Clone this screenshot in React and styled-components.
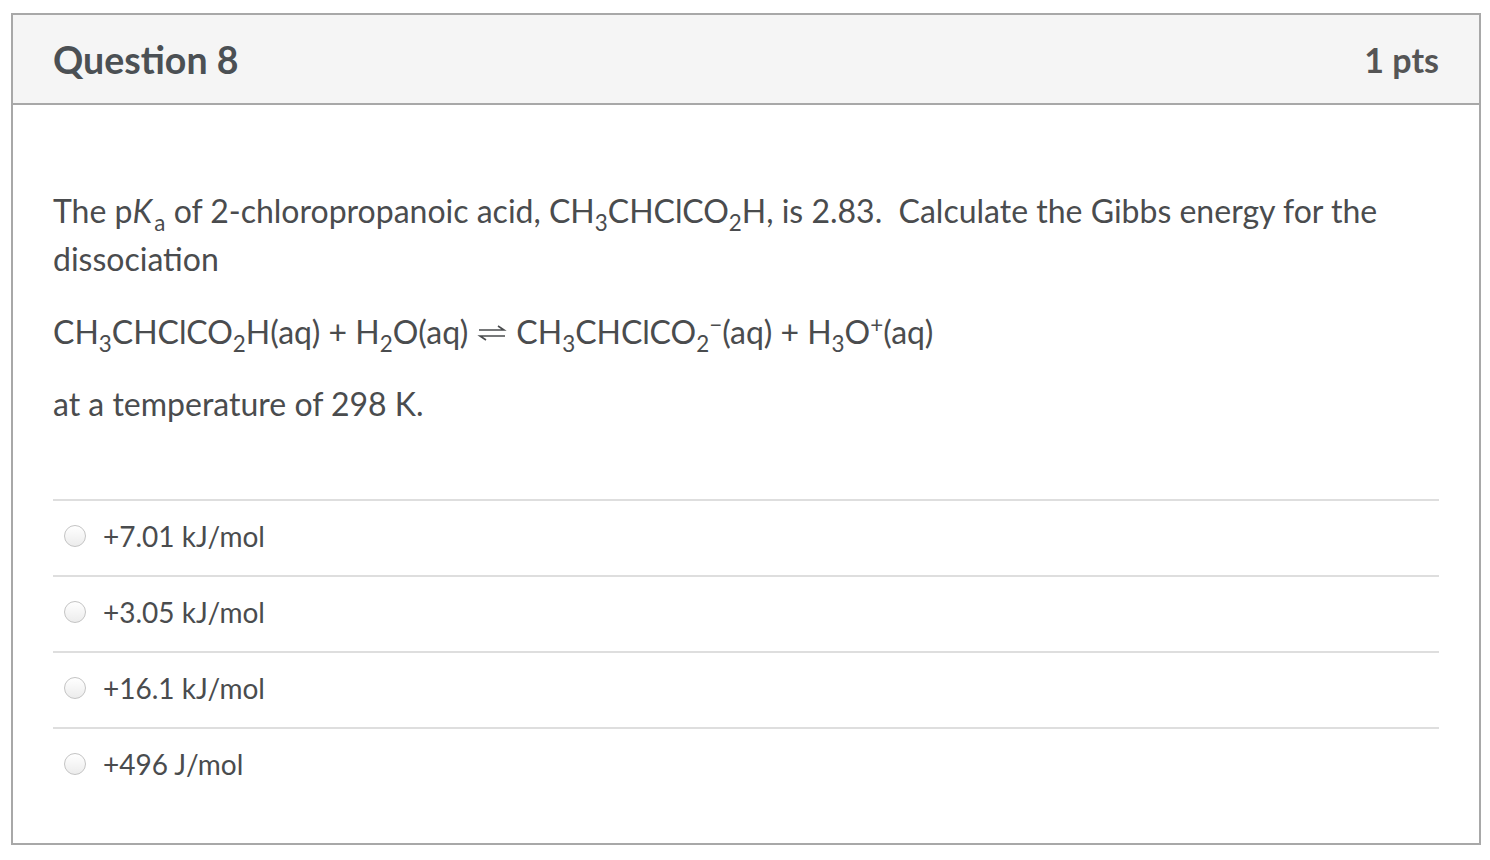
import React from 'react';
import styled, { createGlobalStyle } from 'styled-components';

const GlobalStyle = createGlobalStyle`
  body {
    margin: 0;
    background: #fff;
    font-family: Lato, "Open Sans", sans-serif;
  }
`;

const Page = styled.div`
  padding: 13px 9px 15px 11px;
`;

const Card = styled.div`
  border: 2px solid #a8a8a8;
  height: 832px;
  box-sizing: border-box;
`;

const Header = styled.div`
  display: flex;
  justify-content: space-between;
  align-items: center;
  height: 90px;
  box-sizing: border-box;
  padding: 0 40px 0 40px;
  background: #f5f5f5;
  border-bottom: 2px solid #a8a8a8;
  color: #4b5054;
  font-weight: 700;
`;

const Title = styled.span`
  font-size: 37.5px;
`;

const Points = styled.span`
  color: #555;
  font-size: 34px;
`;

const Body = styled.div`
  padding: 82px 40px 0 40px;
  color: #4a4c4e;
  font-size: 32px;
`;

const Para = styled.p`
  margin: 0 0 ${({ $gap }) => ($gap ?? 24)}px 0;
  line-height: 48px;
`;

const Sub = styled.sub`
  font-size: 0.7em;
  vertical-align: baseline;
  position: relative;
  top: 0.34em;
  line-height: 0;
  margin-left: ${({ $kern }) => $kern || 0}px;
`;

const Sup = styled.sup`
  font-size: 0.7em;
  vertical-align: baseline;
  position: relative;
  top: -0.5em;
  line-height: 0;
`;

const Arrow = styled.span`
  display: inline-block;
  width: 30px;
  margin: 0 9px;
  vertical-align: 3px;
`;

const Options = styled.div`
  margin-top: 71px;
`;

const Option = styled.label`
  display: flex;
  align-items: center;
  height: 76px;
  border-top: 2px solid #dedede;
  box-sizing: border-box;
  padding: 0 0 4px 11px;
  color: #4a4c4e;
  font-size: 28px;
`;

const Radio = styled.span`
  width: 22px;
  height: 22px;
  border-radius: 50%;
  border: 1px solid #c4c4c4;
  background: linear-gradient(#fff, #ececec);
  box-sizing: border-box;
  margin-right: 17px;
`;

const options = ['+7.01 kJ/mol', '+3.05 kJ/mol', '+16.1 kJ/mol', '+496 J/mol'];

const Equilibrium = () => (
  <Arrow>
    <svg width="30" height="16" viewBox="0 0 30 16">
      <path d="M2 5 H27 L21 1" fill="none" stroke="#4a4c4e" strokeWidth="1.6" />
      <path d="M28 11 H3 L9 15" fill="none" stroke="#4a4c4e" strokeWidth="1.6" />
    </svg>
  </Arrow>
);

export default function App() {
  return (
    <Page>
      <GlobalStyle />
      <Card>
        <Header>
          <Title>Question 8</Title>
          <Points>1 pts</Points>
        </Header>
        <Body>
          <Para $gap={22}>
            The p<i>K</i><Sub $kern={2}>a</Sub> of 2-chloropropanoic acid, CH<Sub>3</Sub>CHClCO<Sub>2</Sub>H, is 2.83.&nbsp; Calculate the Gibbs energy for the dissociation
          </Para>
          <Para>
            CH<Sub>3</Sub>CHClCO<Sub>2</Sub>H(aq) + H<Sub>2</Sub>O(aq)<Equilibrium />CH<Sub>3</Sub>CHClCO<Sub>2</Sub><Sup>−</Sup>(aq) + H<Sub>3</Sub>O<Sup>+</Sup>(aq)
          </Para>
          <Para>at a temperature of 298 K.</Para>
          <Options>
            {options.map((o) => (
              <Option key={o}>
                <Radio />
                {o}
              </Option>
            ))}
          </Options>
        </Body>
      </Card>
    </Page>
  );
}
